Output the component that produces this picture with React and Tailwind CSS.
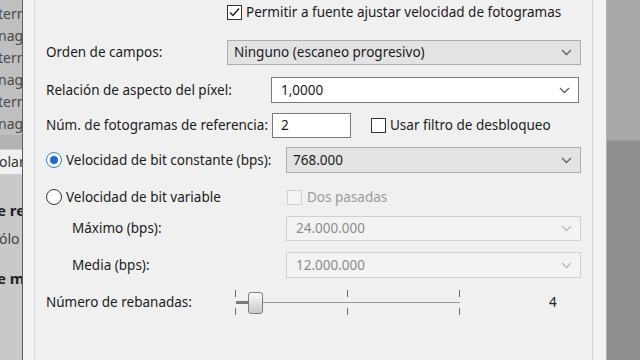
import React from "react";

const Chevron = ({ color = "#5a5a5a" }) => (
  <svg width="11" height="7" viewBox="0 0 11 7" className="shrink-0">
    <path d="M1 1 L5.5 5.5 L10 1" fill="none" stroke={color} strokeWidth="1.3" />
  </svg>
);

const Combo = ({ w, h = 26, text, variant }) => {
  const styles = {
    gray: "bg-[#e3e3e3] border-[#adadad] text-[#1b1b1b]",
    white: "bg-white border-[#7a7a7a] text-[#1b1b1b]",
    disabled: "bg-[#f3f3f3] border-[#d0d0d0] text-[#8c8c8c]",
  };
  return (
    <div
      className={`flex items-center border pl-[6px] pr-[8px] ${styles[variant]}`}
      style={{ width: w, height: h }}
    >
      <span className="flex-1 whitespace-nowrap">{text}</span>
      <Chevron color={variant === "disabled" ? "#b8b8b8" : "#606060"} />
    </div>
  );
};

const CheckBox = ({ checked, disabled }) => (
  <div
    className={`w-[15px] h-[15px] border flex items-center justify-center shrink-0 ${
      disabled ? "border-[#cfcfcf] bg-[#f4f4f4]" : "border-[#333] bg-white"
    }`}
  >
    {checked && (
      <svg width="13" height="13" viewBox="0 0 13 13">
        <path d="M2 6.5 L5 9.5 L11 2.5" fill="none" stroke="#222" strokeWidth="1.4" />
      </svg>
    )}
  </div>
);

const Radio = ({ checked }) => (
  <div
    className={`w-[16px] h-[16px] rounded-full border flex items-center justify-center shrink-0 bg-white ${
      checked ? "border-[#2e78c8]" : "border-[#333]"
    }`}
  >
    {checked && <div className="w-[8px] h-[8px] rounded-full bg-[#1a6fd0]" />}
  </div>
);

export default function App() {
  return (
    <div
      className="w-[640px] h-[360px] flex overflow-hidden text-[13.5px] text-[#1b1b1b]"
      style={{ fontFamily: "'Noto Sans', 'Open Sans', sans-serif" }}
    >
      {/* left background app strip */}
      <div className="w-[22px] shrink-0 flex flex-col overflow-hidden bg-[#c4c4c4] text-[#4a4a4a] text-[14px]">
        <div className="flex flex-col pt-[3px] bg-[#bfbfbf]">
          {["tern", "nagen", "tern", "nagen", "tern", "nagen"].map((t, i) => (
            <div key={i} className="h-[22px] leading-[22px] whitespace-nowrap ml-[-2px]">
              {t}
            </div>
          ))}
        </div>
        <div className="h-[14px] bg-[#b3b3b3]" />
        <div className="h-[26px] bg-[#f0f0f0] border-y border-[#cfcfcf] leading-[24px] whitespace-nowrap ml-[-1px] text-[#333]">
          olar
        </div>
        <div className="flex-1 bg-[#c9c9c9] text-[#222]">
          <div className="mt-[24px] font-bold text-[15px] whitespace-nowrap ml-[-3px]">e re</div>
          <div className="mt-[6px] whitespace-nowrap ml-[-1px] text-[#444]">ólo</div>
          <div className="mt-[18px] font-bold text-[15px] whitespace-nowrap ml-[-3px]">e m</div>
        </div>
      </div>

      {/* dialog */}
      <div className="w-[584px] shrink-0 flex border-l border-[#5e5e5e] bg-[#f0f0f0]">
        <div className="w-[12px] shrink-0 border-r border-[#d9d9d9] bg-[#f3f3f3]" />
        <div className="flex-1 flex flex-col pl-[11px]">
          {/* row 1 */}
          <div className="h-[19px] mt-[3px] flex items-center pl-[181px]">
            <CheckBox checked />
            <span className="ml-[4px] whitespace-nowrap">Permitir a fuente ajustar velocidad de fotogramas</span>
          </div>
          {/* row 2 */}
          <div className="h-[25px] mt-[18px] flex items-center">
            <span className="w-[181px] shrink-0">Orden de campos:</span>
            <Combo w={354} h={25} text="Ninguno (escaneo progresivo)" variant="gray" />
          </div>
          {/* row 3 */}
          <div className="h-[26px] mt-[12px] flex items-center">
            <span className="w-[225px] shrink-0">Relación de aspecto del píxel:</span>
            <Combo w={308} h={26} text={<span className="pl-[3px]">1,0000</span>} variant="white" />
          </div>
          {/* row 4 */}
          <div className="h-[25px] mt-[10px] flex items-center">
            <span className="w-[226px] shrink-0 whitespace-nowrap">Núm. de fotogramas de referencia:</span>
            <div className="w-[79px] h-[25px] bg-white border border-[#7a7a7a] pl-[8px] flex items-center">2</div>
            <div className="ml-[20px] flex items-center">
              <CheckBox />
              <span className="ml-[4px] whitespace-nowrap">Usar filtro de desbloqueo</span>
            </div>
          </div>
          {/* row 5 */}
          <div className="h-[26px] mt-[9px] flex items-center">
            <div className="w-[240px] shrink-0 flex items-center">
              <Radio checked />
              <span className="ml-[4px] whitespace-nowrap">Velocidad de bit constante (bps):</span>
            </div>
            <Combo w={295} h={26} text="768.000" variant="gray" />
          </div>
          {/* row 6 */}
          <div className="h-[18px] mt-[15px] flex items-center">
            <div className="w-[241px] shrink-0 flex items-center">
              <Radio />
              <span className="ml-[4px] whitespace-nowrap">Velocidad de bit variable</span>
            </div>
            <CheckBox disabled />
            <span className="ml-[5px] text-[#9a9a9a] whitespace-nowrap">Dos pasadas</span>
          </div>
          {/* row 7 */}
          <div className="h-[25px] mt-[10px] flex items-center">
            <span className="w-[240px] shrink-0 pl-[26px]">Máximo (bps):</span>
            <Combo w={295} h={25} text={<span className="pl-[3px]">24.000.000</span>} variant="disabled" />
          </div>
          {/* row 8 */}
          <div className="h-[26px] mt-[11px] flex items-center">
            <span className="w-[240px] shrink-0 pl-[26px]">Media (bps):</span>
            <Combo w={295} h={26} text={<span className="pl-[3px]">12.000.000</span>} variant="disabled" />
          </div>
          {/* row 9 slider */}
          <div className="h-[27px] mt-[11px] flex items-center">
            <span className="w-[189px] shrink-0">Número de rebanadas:</span>
            <div className="relative w-[226px] h-[27px] shrink-0">
              {/* track */}
              <div className="absolute left-[1px] right-[1px] top-[13px] h-px bg-[#9a9a9a]" />
              <div className="absolute left-[1px] w-[13px] top-[12px] h-[3px] bg-[#7a7a7a]" />
              {[0, 112, 224].map((x) => (
                <React.Fragment key={x}>
                  <div className="absolute top-[1px] h-[7px] w-px bg-[#6a6a6a]" style={{ left: x }} />
                  <div className="absolute top-[19px] h-[7px] w-px bg-[#6a6a6a]" style={{ left: x }} />
                </React.Fragment>
              ))}
              <div className="absolute left-[13px] top-[3px] w-[15px] h-[22px] rounded-[3px] border border-[#7d7d7d] bg-gradient-to-b from-[#fafafa] to-[#c9c9c9]" />
            </div>
            <span className="ml-[88px] text-[#222]">4</span>
          </div>
        </div>
        <div className="w-[14px] shrink-0 border-l border-[#d2d2d2] bg-[#f2f2f2]" />
      </div>

      {/* right background */}
      <div className="flex-1 flex flex-col border-l border-[#b0b0b0]">
        <div className="h-[140px] bg-[#a9a9a9]" />
        <div className="flex-1 bg-[#8f8f8f] border-t border-[#9c9c9c]" />
      </div>
    </div>
  );
}
